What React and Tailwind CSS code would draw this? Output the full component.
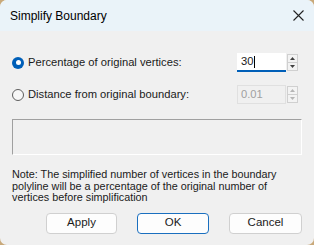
import React from 'react'

function Spinner({ disabled }) {
  const c = disabled ? '#b5b5b5' : '#404040'
  return (
    <div className="flex flex-col w-[11px] h-[17px] border border-[#d0d0d0] bg-[#f3f3f3]">
      <div className="flex-1 flex items-center justify-center border-b border-[#d0d0d0]">
        <svg width="5" height="3" viewBox="0 0 5 3"><path d="M0 3 L2.5 0 L5 3 Z" fill={c} /></svg>
      </div>
      <div className="flex-1 flex items-center justify-center">
        <svg width="5" height="3" viewBox="0 0 5 3"><path d="M0 0 L2.5 3 L5 0 Z" fill={c} /></svg>
      </div>
    </div>
  )
}

function Radio({ checked }) {
  return checked ? (
    <span className="w-[12px] h-[12px] rounded-full bg-[#005fb8] flex items-center justify-center">
      <span className="w-[5px] h-[5px] rounded-full bg-white" />
    </span>
  ) : (
    <span className="w-[12px] h-[12px] rounded-full border border-[#5e5e5e] bg-[#f7f7f7]" />
  )
}

export default function App() {
  return (
    <div className="w-[314px] h-[245px] bg-[#c9a97a] font-['Liberation_Sans',sans-serif] text-[11.2px] text-[#1a1a1a]">
      <div className="w-full h-full rounded-[7px] overflow-hidden bg-[#f0f0f0] flex flex-col">
        <div className="h-[31px] bg-[#eaf3f9] flex items-center justify-between pl-[10px] pr-[10px]">
          <span className="text-[12px] text-black">Simplify Boundary</span>
          <svg width="11" height="11" viewBox="0 0 11 11"><path d="M0.5 0.5 L10.5 10.5 M10.5 0.5 L0.5 10.5" stroke="#222" strokeWidth="1.1" /></svg>
        </div>

        <div className="px-[12px] pt-[22px]">
          <div className="flex items-center h-[19px]">
            <Radio checked />
            <span className="ml-[4px] flex-1">Percentage of original vertices:</span>
            <div className="w-[49px] h-[19px] bg-white border-b-2 border-[#005fb8] flex items-center pl-[4px]">
              <span>30</span>
              <span className="w-px h-[12px] bg-black ml-px" />
            </div>
            <div className="ml-[1px] mr-[4px]"><Spinner /></div>
          </div>

          <div className="flex items-center h-[19px] mt-[13px]">
            <Radio />
            <span className="ml-[4px] flex-1">Distance from original boundary:</span>
            <div className="w-[49px] h-[19px] bg-[#f0f0f0] border border-[#e0e0e0] flex items-center pl-[3px] text-[#a0a0a0]">
              0.01
            </div>
            <div className="ml-[1px] mr-[4px]"><Spinner disabled /></div>
          </div>

          <div className="mt-[15px] h-[36px] border border-t-[#a0a0a0] border-l-[#a0a0a0] border-r-white border-b-white" />

          <p className="mt-[14px] leading-[11.5px] text-[10.8px] text-[#1a1a1a] pr-[4px]">
            Note: The simplified number of vertices in the boundary polyline will be a percentage of the original number of vertices before simplification
          </p>

          <div className="flex justify-end gap-[20px] mt-[9px] pr-0">
            <button className="w-[71px] h-[21px] bg-[#fdfdfd] border border-[#d0d0d0] rounded-[4px] text-[11.5px]">Apply</button>
            <button className="w-[72px] h-[21px] bg-[#fdfdfd] border border-[#1a6fbf] rounded-[4px] text-[11.5px]">OK</button>
            <button className="w-[73px] h-[21px] bg-[#fdfdfd] border border-[#d0d0d0] rounded-[4px] text-[11.5px]">Cancel</button>
          </div>
        </div>
      </div>
    </div>
  )
}
